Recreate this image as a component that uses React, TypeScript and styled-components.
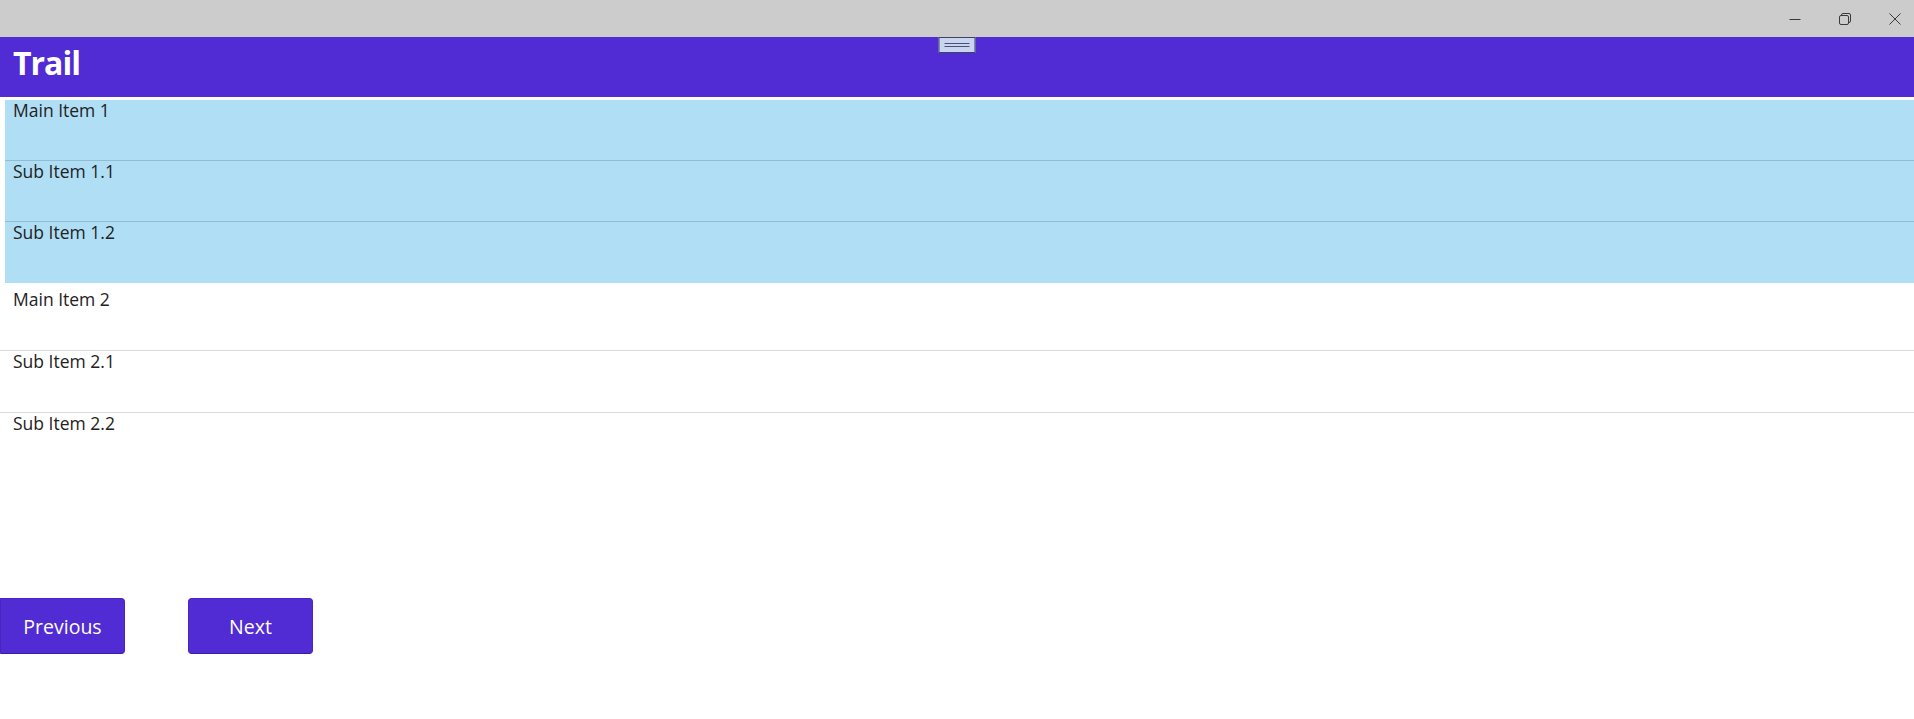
import React from 'react'
import styled, { createGlobalStyle } from 'styled-components'

const GlobalStyle = createGlobalStyle`
    html, body {
        margin: 0;
        padding: 0;
        background: #ffffff;
        overflow: hidden;
    }
    body {
        font-family: "Open Sans", "Noto Sans", sans-serif;
    }
`

const Window = styled.div`
    position: relative;
    display: flex;
    flex-direction: column;
    width: 100vw;
    height: 100vh;
    background: #ffffff;
`
const TitleBar = styled.div`
    display: flex;
    justify-content: flex-end;
    align-items: center;
    gap: 38px;
    height: 37px;
    padding-right: 13px;
    background: #cccccc;
`
const CaptionButton = styled.div`
    display: flex;
    align-items: center;
    justify-content: center;
    width: 12px;
    height: 12px;
    color: #3a3a3a;
`
const DragHandle = styled.div`
    position: absolute;
    top: 37px;
    left: 50%;
    transform: translateX(-50%);
    width: 37px;
    height: 16px;
    box-sizing: border-box;
    border: 1px solid #3d4466;
    background: #c9d4ef;
    display: flex;
    flex-direction: column;
    align-items: center;
    justify-content: center;
    gap: 2px;
`
const HandleLine = styled.div`
    width: 25px;
    height: 1px;
    background: #4a5276;
`
const Header = styled.div`
    display: flex;
    align-items: center;
    height: 60px;
    box-sizing: border-box;
    padding: 0 13px 9px;
    background: #512bd4;
    color: #ffffff;
`
const Title = styled.h1`
    margin: 0;
    font-family: "Open Sans", sans-serif;
    font-weight: 700;
    font-size: 32px;
    letter-spacing: -1px;
    line-height: 1;
`
const List = styled.div`
    flex: 1;
    display: flex;
    flex-direction: column;
    margin-top: 3px;
`
const Group = styled.div<{ selected?: boolean }>`
    display: flex;
    flex-direction: column;
    margin-left: ${(props) => (props.selected ? '5px' : '0px')};
    padding-top: ${(props) => (props.selected ? '0px' : '6px')};
    background: ${(props) => (props.selected ? '#b0dff5' : 'transparent')};
`
const Row = styled.div<{ selected?: boolean; divider?: boolean }>`
    height: ${(props) => (props.selected ? '61px' : '62px')};
    box-sizing: border-box;
    padding: ${(props) => (props.selected ? '0 8px' : '0 13px')};
    border-bottom: 1px solid ${(props) => (props.divider ? (props.selected ? '#91bcd4' : '#d9d9d9') : 'transparent')};
    font-size: 17.5px;
    line-height: 20px;
    color: #222222;
`
const Footer = styled.div`
    display: flex;
    gap: 63px;
    padding-bottom: 65px;
`
const NavButton = styled.button`
    width: 125px;
    height: 56px;
    border: 1px solid #4a25c4;
    border-bottom-color: #3a1ca6;
    border-radius: 4px;
    background: #512bd4;
    color: #ffffff;
    font-family: "Open Sans", sans-serif;
    font-size: 19.5px;
    padding: 0;
    cursor: pointer;
    &:first-child {
        border-top-left-radius: 0;
        border-bottom-left-radius: 0;
    }
`

const groups = [
    { selected: true, items: ['Main Item 1', 'Sub Item 1.1', 'Sub Item 1.2'] },
    { selected: false, items: ['Main Item 2', 'Sub Item 2.1', 'Sub Item 2.2'] },
]

export default function App() {
    return (
        <>
            <GlobalStyle />
            <Window>
                <TitleBar>
                    <CaptionButton>
                        <svg width="12" height="12" viewBox="0 0 12 12">
                            <path d="M0.5 6.5h11" stroke="currentColor" strokeWidth="1" />
                        </svg>
                    </CaptionButton>
                    <CaptionButton>
                        <svg width="12" height="12" viewBox="0 0 12 12" fill="none" stroke="currentColor" strokeWidth="1">
                            <rect x="0.5" y="2.5" width="9" height="9" rx="1.5" />
                            <path d="M2.5 2.5V2a1.5 1.5 0 0 1 1.5-1.5h6A1.5 1.5 0 0 1 11.5 2v6a1.5 1.5 0 0 1-1.5 1.5h-0.5" />
                        </svg>
                    </CaptionButton>
                    <CaptionButton>
                        <svg width="12" height="12" viewBox="0 0 12 12" stroke="currentColor" strokeWidth="1">
                            <path d="M0.5 0.5l11 11M11.5 0.5l-11 11" />
                        </svg>
                    </CaptionButton>
                </TitleBar>
                <DragHandle>
                    <HandleLine />
                    <HandleLine />
                </DragHandle>
                <Header>
                    <Title>Trail</Title>
                </Header>
                <List>
                    {groups.map((group, gi) => (
                        <Group key={gi} selected={group.selected}>
                            {group.items.map((item, i) => (
                                <Row key={item} selected={group.selected} divider={i < group.items.length - 1}>
                                    {item}
                                </Row>
                            ))}
                        </Group>
                    ))}
                </List>
                <Footer>
                    <NavButton>Previous</NavButton>
                    <NavButton>Next</NavButton>
                </Footer>
            </Window>
        </>
    )
}
